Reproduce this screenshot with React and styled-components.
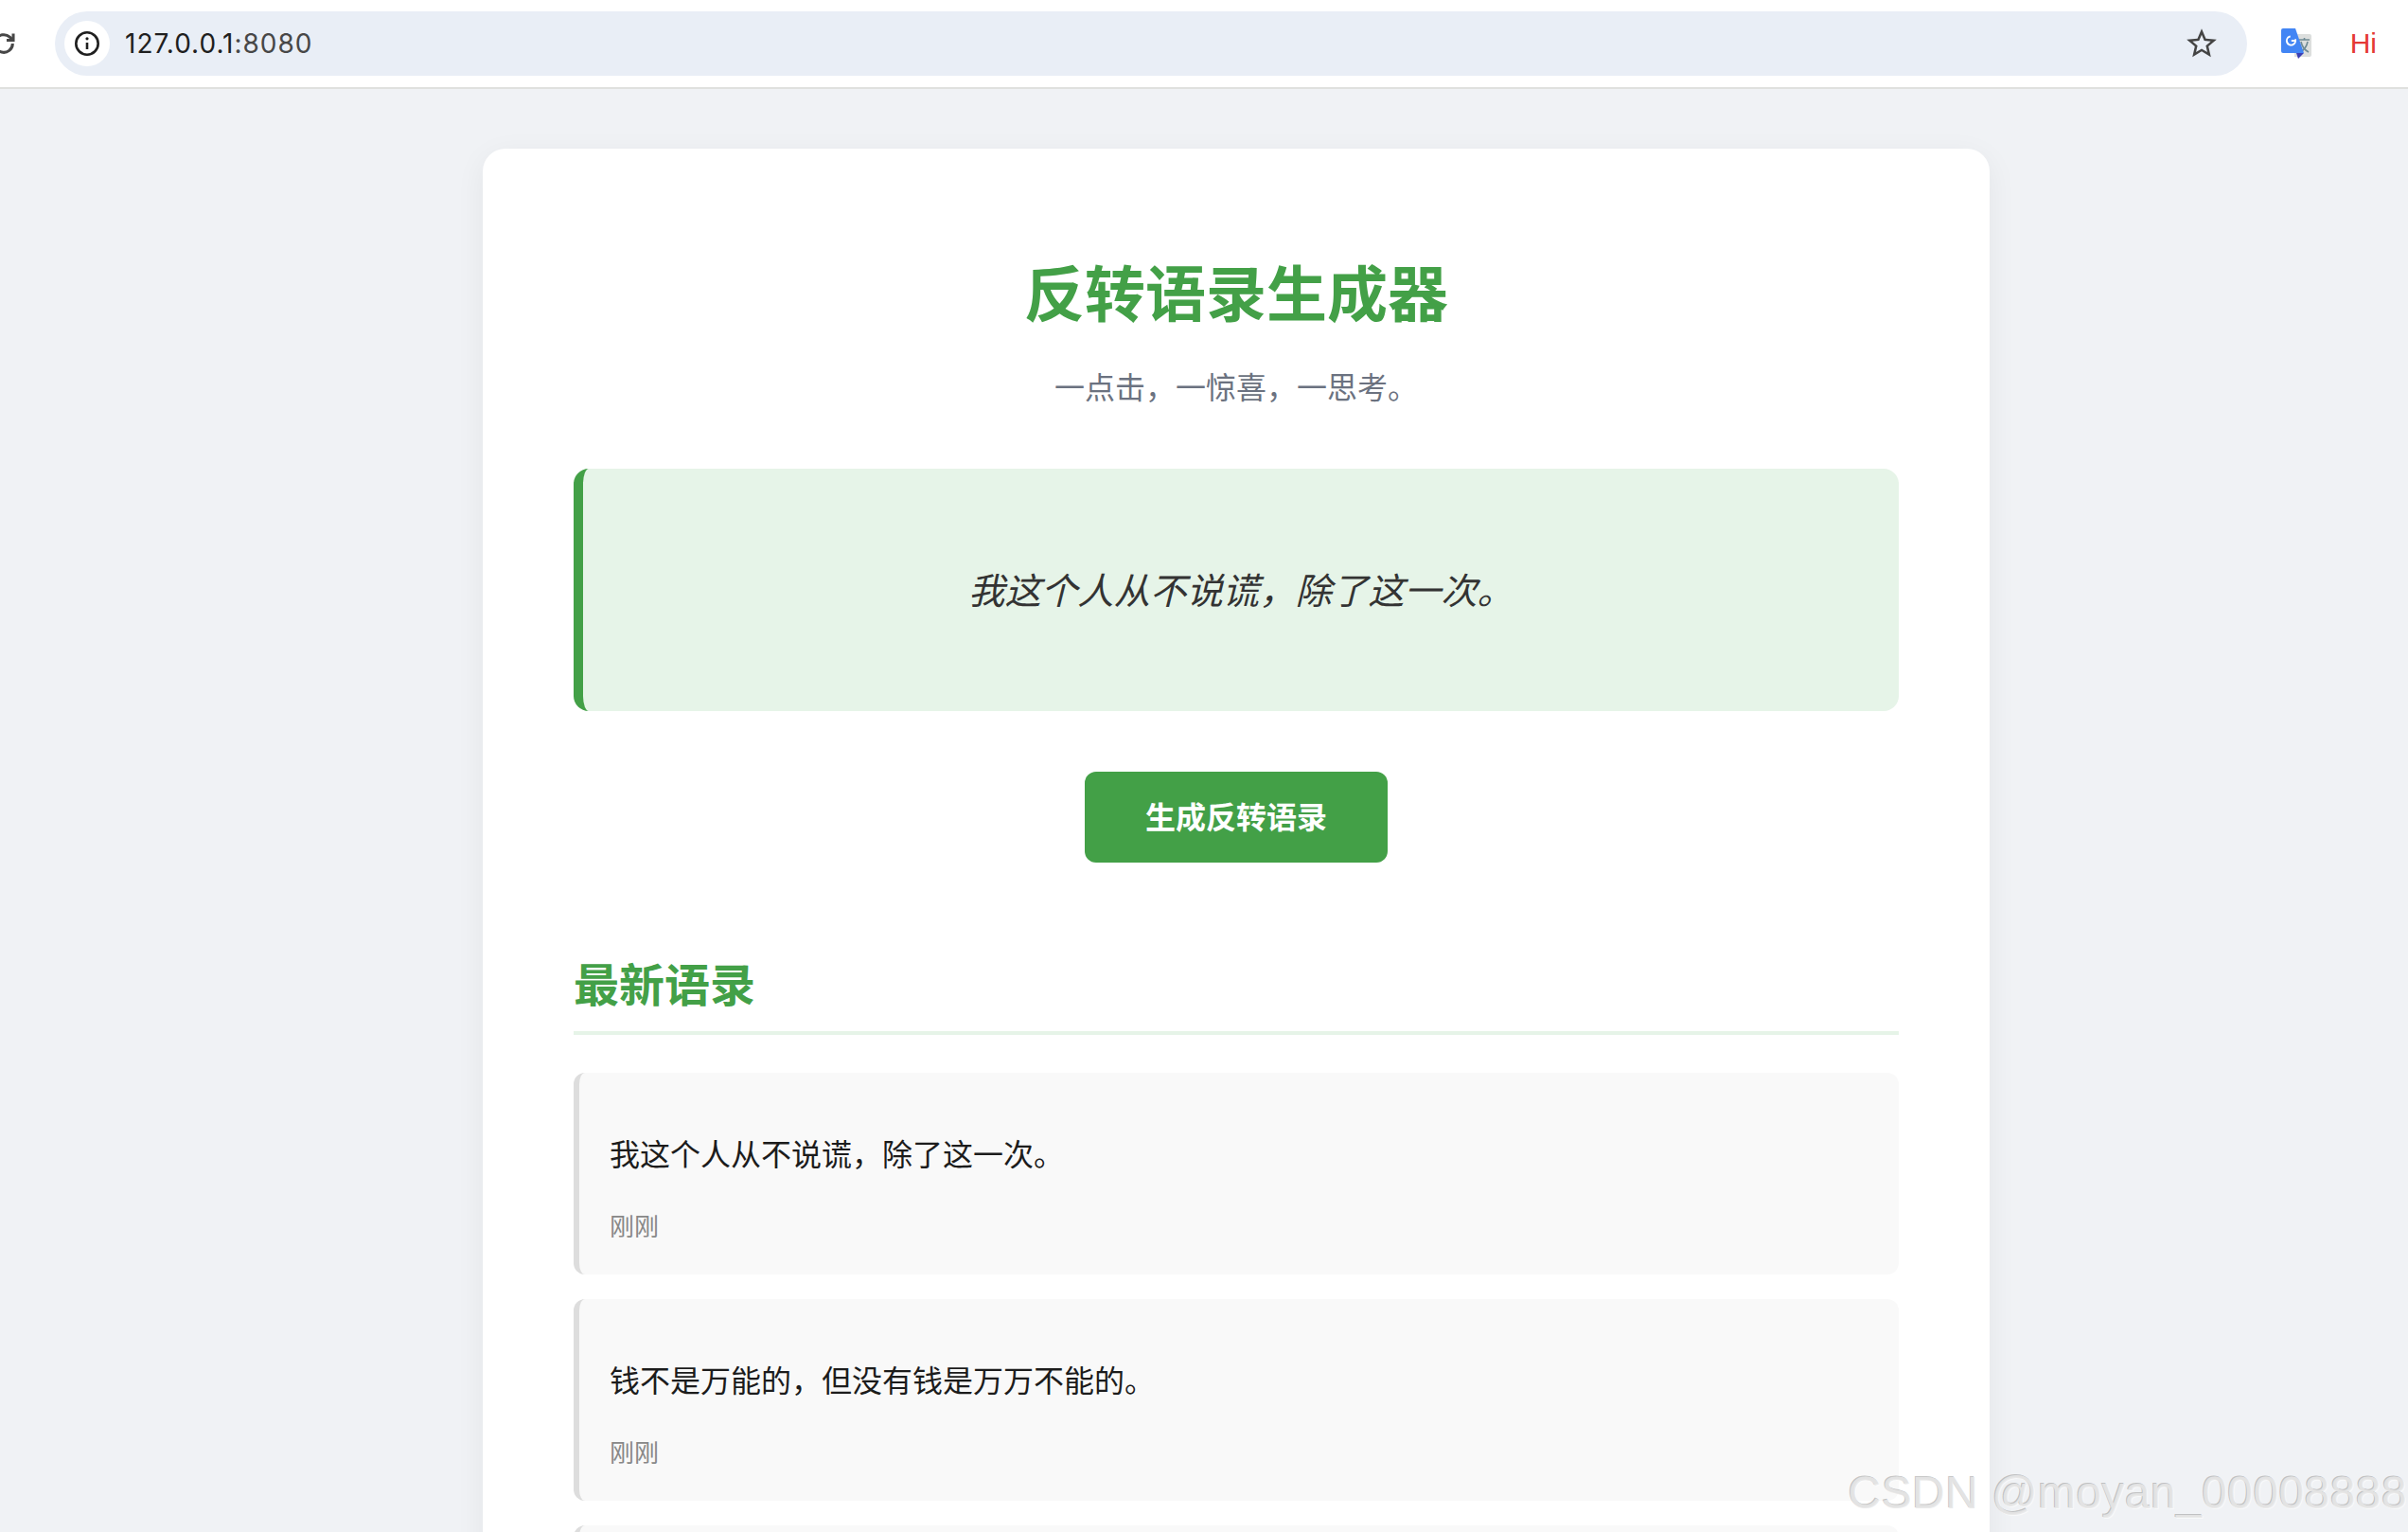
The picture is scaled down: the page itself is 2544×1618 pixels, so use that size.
import React from 'react';
import styled, { createGlobalStyle } from 'styled-components';

const GlobalStyle = createGlobalStyle`
  html, body {
    margin: 0;
    padding: 0;
    height: 100%;
    overflow: hidden;
    background: #f0f2f5;
    font-family: "Noto Sans CJK SC", "Liberation Sans", sans-serif;
  }
  * { box-sizing: border-box; }
`;

const Screen = styled.div`
  position: relative;
  height: 1618px;
  overflow: hidden;
`;

const Toolbar = styled.header`
  display: flex;
  align-items: center;
  height: 94px;
  padding-right: 33px;
  background: #fff;
  border-bottom: 2px solid #dfe0de;
  overflow: hidden;
`;

const Reload = styled.svg`
  flex: none;
  width: 28px;
  height: 28px;
  margin: 0 40px 0 -10px;
  color: #474747;
`;

const Omnibox = styled.div`
  flex: 1;
  display: flex;
  align-items: center;
  height: 68px;
  padding: 0 29px 0 10px;
  border-radius: 34px;
  background: #e9eef6;
`;

const InfoChip = styled.span`
  display: flex;
  align-items: center;
  justify-content: center;
  width: 48px;
  height: 48px;
  margin-right: 16px;
  border-radius: 50%;
  background: #fff;
  color: #1f1f1f;
`;

const Url = styled.span`
  flex: 1;
  font-family: Inter, "Liberation Sans", sans-serif;
  font-size: 28px;
  letter-spacing: 1px;
  color: #1f1f1f;
`;

const Host = styled.span`
  color: #474747;
`;

const StarIcon = styled.svg`
  flex: none;
  width: 38px;
  height: 38px;
  fill: #444;
`;

const Extension = styled.svg`
  flex: none;
  width: 32px;
  height: 32px;
  margin-left: 36px;
`;

const Hi = styled.span`
  margin-left: 41px;
  font-family: "Liberation Sans", sans-serif;
  font-size: 30px;
  color: #e53935;
`;

const Main = styled.main`
  padding: 63px 0 0 510px;
`;

const Card = styled.section`
  width: 1592px;
  padding: 101px 96px 64px;
  border-radius: 24px;
  background: #fff;
  box-shadow: 0 8px 32px rgba(0, 0, 0, 0.06);
`;

const Title = styled.h1`
  margin: 0;
  font-size: 64px;
  line-height: 96px;
  font-weight: 700;
  text-align: center;
  color: #43a047;
`;

const Subtitle = styled.p`
  margin: 29px 0 0;
  font-size: 32px;
  line-height: 48px;
  text-align: center;
  color: #6b7280;
`;

const Quote = styled.blockquote`
  display: flex;
  align-items: center;
  justify-content: center;
  height: 256px;
  margin: 64px 0 0;
  padding-bottom: 4px;
  border-left: 10px solid #43a047;
  border-radius: 16px;
  background: #e6f4e8;
  font-size: 38.4px;
  font-style: italic;
  color: #333;
`;

const ButtonRow = styled.div`
  display: flex;
  justify-content: center;
  margin-top: 64px;
`;

const GenerateButton = styled.button`
  width: 320px;
  height: 96px;
  padding: 0 0 5px;
  border: 0;
  border-radius: 12px;
  background: #43a047;
  font-family: inherit;
  font-size: 32px;
  font-weight: 700;
  color: #fff;
`;

const SectionTitle = styled.h2`
  margin: 90px 0 0;
  padding-bottom: 16px;
  border-bottom: 4px solid #e6f4e8;
  font-size: 48px;
  line-height: 72px;
  font-weight: 700;
  color: #43a047;
`;

const QuoteList = styled.div`
  display: flex;
  flex-direction: column;
  gap: 26px;
  margin-top: 40px;
`;

const QuoteItem = styled.article`
  height: 213px;
  padding: 60px 40px 0 32px;
  border-left: 6px solid #ddd;
  border-radius: 12px;
  background: #f9f9f9;
`;

const QuoteText = styled.p`
  margin: 0;
  font-size: 32px;
  line-height: 48px;
  color: #1c1c1c;
`;

const QuoteTime = styled.p`
  margin: 33px 0 0;
  font-size: 26px;
  line-height: 40px;
  color: #888;
`;

const Watermark = styled.div`
  position: absolute;
  right: 1px;
  bottom: 13px;
  font-family: "Liberation Sans", sans-serif;
  font-size: 48px;
  line-height: 56px;
  letter-spacing: 0.4px;
  color: rgba(232, 232, 232, 0.9);
  text-shadow: -1px -1px 0 rgba(150, 150, 150, 0.55), 1px 1px 0 rgba(255, 255, 255, 0.6);
  white-space: nowrap;
`;

const quotes = [
  '我这个人从不说谎，除了这一次。',
  '钱不是万能的，但没有钱是万万不能的。',
];

const App = () => (
  <Screen>
    <GlobalStyle />
    <Toolbar>
      <Reload viewBox="0 0 24 24" fill="none" stroke="currentColor" strokeWidth="2.6">
        <path d="M20 12a8 8 0 1 1-2.6-5.9L20 8.5" />
        <path d="M20.6 3v6h-6" />
      </Reload>
      <Omnibox>
        <InfoChip>
          <svg width="28" height="28" viewBox="0 0 28 28" fill="none" stroke="currentColor" strokeWidth="2.6">
            <circle cx="14" cy="14" r="11.7" />
            <path d="M14 13v7" />
            <circle cx="14" cy="8.8" r="1.6" fill="currentColor" stroke="none" />
          </svg>
        </InfoChip>
        <Url>127.0.0.1<Host>:8080</Host></Url>
        <StarIcon viewBox="0 0 24 24">
          <path d="M22 9.24l-7.19-.62L12 2 9.19 8.63 2 9.24l5.46 4.73L5.82 21 12 17.27 18.18 21l-1.63-7.03L22 9.24zM12 15.4l-3.76 2.27 1-4.28-3.32-2.88 4.38-.38L12 6.1l1.71 4.04 4.38.38-3.32 2.88 1 4.28L12 15.4z" />
        </StarIcon>
      </Omnibox>
      <Extension viewBox="0 0 32 32">
        <path d="M14 6h16a2 2 0 0 1 2 2v20a2 2 0 0 1-2 2H14z" fill="#dcdedd" />
        <path d="M19 12h11M24.5 10v2M21 14c1 5 4 9 8 11M28 14c-1 5-4 9-8 11" fill="none" stroke="#6f8a94" strokeWidth="1.6" />
        <path d="M2 0h13l9 26H2a2 2 0 0 1-2-2V2a2 2 0 0 1 2-2z" fill="#4285f4" />
        <path d="M16 26h8l-6 6z" fill="#3c3fb5" />
        <circle cx="10.5" cy="13" r="4.6" fill="none" stroke="#fff" strokeWidth="2" strokeDasharray="22 6" transform="rotate(-20 10.5 13)" />
        <path d="M10.8 13h5" stroke="#fff" strokeWidth="2" />
      </Extension>
      <Hi>Hi</Hi>
    </Toolbar>
    <Main>
      <Card>
        <Title>反转语录生成器</Title>
        <Subtitle>一点击，一惊喜，一思考。</Subtitle>
        <Quote>我这个人从不说谎，除了这一次。</Quote>
        <ButtonRow>
          <GenerateButton>生成反转语录</GenerateButton>
        </ButtonRow>
        <SectionTitle>最新语录</SectionTitle>
        <QuoteList>
          {quotes.map(text => (
            <QuoteItem key={text}>
              <QuoteText>{text}</QuoteText>
              <QuoteTime>刚刚</QuoteTime>
            </QuoteItem>
          ))}
          <QuoteItem />
        </QuoteList>
      </Card>
    </Main>
    <Watermark>CSDN @moyan_00008888</Watermark>
  </Screen>
);

export default App;
